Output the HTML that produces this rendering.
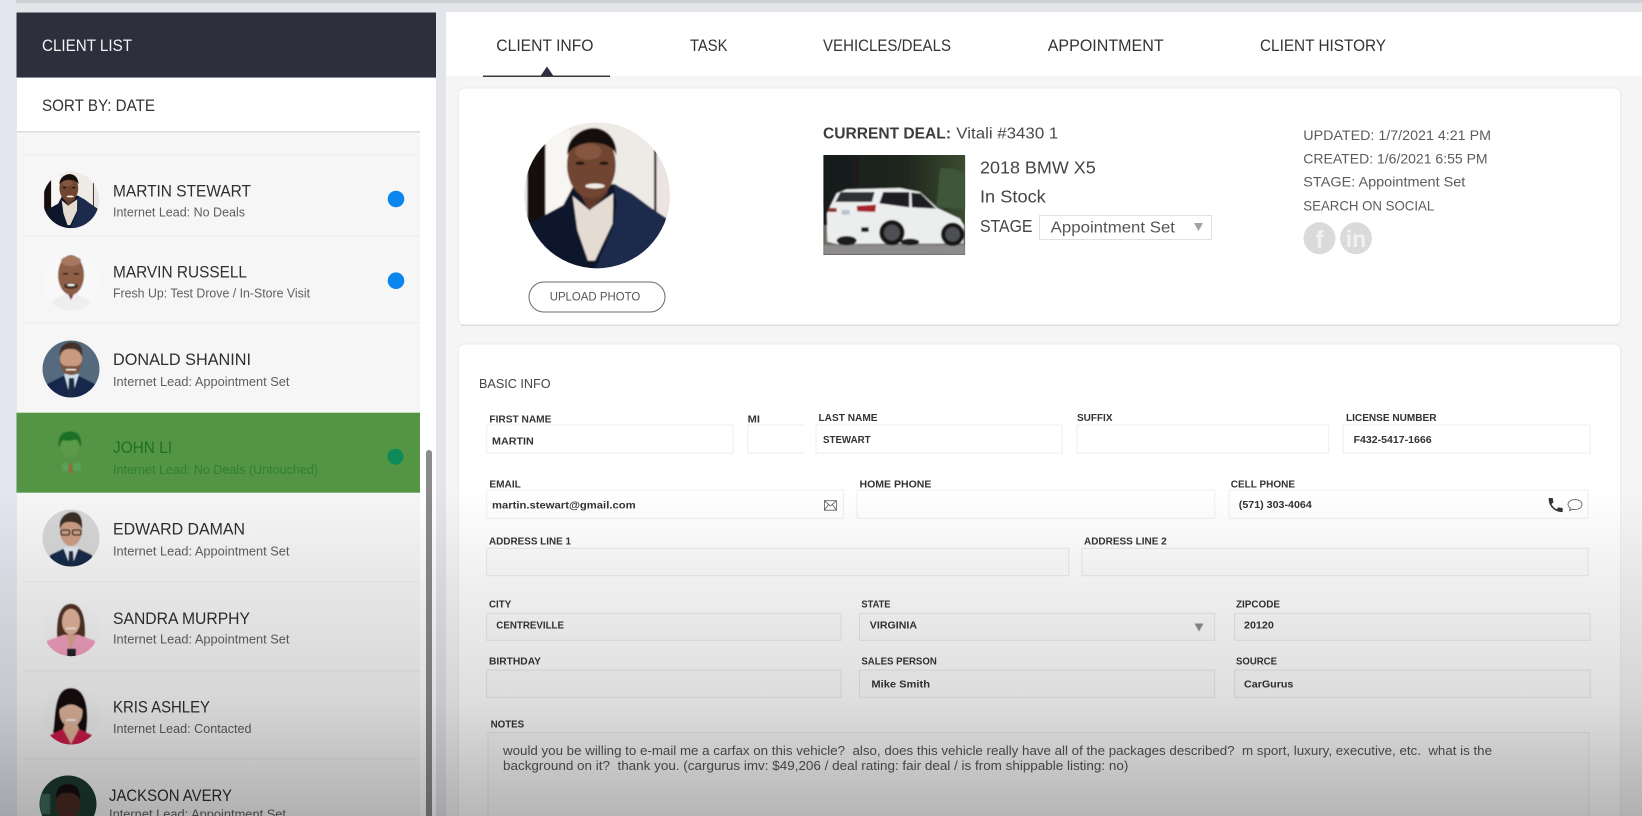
<!DOCTYPE html>
<html lang="en">
<head>
<meta charset="utf-8">
<title>Client List</title>
<style>
html,body{margin:0;padding:0;width:1642px;height:816px;overflow:hidden;background:#e3e6ee}
svg{display:block;filter:blur(.35px)}
text{font-family:"Liberation Sans",Arial,sans-serif;white-space:pre}
.tab{font-size:16.5px;fill:#333}
.hd{font-size:16.5px;fill:#333;transform:translateY(-.8px)}
.nm{font-size:16.5px;fill:#2e2e2e;transform:translateY(-.8px)}
.sb{font-size:12.5px;fill:#5f5f5f}
.lb{font-size:10.2px;font-weight:700;fill:#333}
.vl{font-size:10.5px;font-weight:700;fill:#333}
.dt{font-size:14px;fill:#5c5c5c}
.cr{font-size:17.5px;fill:#444}
.nt{font-size:12.5px;fill:#555}
.in{fill:#fff;stroke:#eeeeee;stroke-width:1}
.in2{fill:#fdfdfd;stroke:#e9e9e9;stroke-width:1}
</style>
</head>
<body>
<svg xmlns="http://www.w3.org/2000/svg" width="1642" height="816" viewBox="0 0 1642 816">
<defs>
<linearGradient id="fade" gradientUnits="userSpaceOnUse" x1="0" y1="490" x2="0" y2="816">
<stop offset="0" stop-color="#000" stop-opacity="0"/>
<stop offset=".276" stop-color="#000" stop-opacity=".06"/>
<stop offset=".644" stop-color="#000" stop-opacity=".13"/>
<stop offset="1" stop-color="#000" stop-opacity=".28"/>
</linearGradient>
<linearGradient id="trees" x1="0" y1="0" x2="1" y2="0">
<stop offset="0" stop-color="#16191a"/>
<stop offset=".6" stop-color="#20281f"/>
<stop offset="1" stop-color="#3c4c30"/>
</linearGradient>
<filter id="b1" x="-10%" y="-10%" width="120%" height="120%"><feGaussianBlur stdDeviation="2.5"/></filter>
<filter id="b2" x="-10%" y="-10%" width="120%" height="120%"><feGaussianBlur stdDeviation=".5"/></filter>
<clipPath id="bigc"><circle cx="291" cy="256" r="219"/></clipPath>
<clipPath id="c29"><circle cx="0" cy="0" r="28.5"/></clipPath>
<clipPath id="carc"><rect x="970" y="135" width="426" height="300"/></clipPath>
<g id="martin">
<g clip-path="url(#bigc)"><g filter="url(#b1)">
<rect x="60" y="30" width="470" height="460" fill="#eeebe7"/>
<rect x="130" y="60" width="80" height="260" fill="#f7f6f2"/>
<rect x="82" y="100" width="54" height="240" fill="#17110e"/>
<rect x="462" y="120" width="8" height="190" fill="#3a3532"/>
<rect x="470" y="100" width="50" height="220" fill="#ebe4e2"/>
<path d="M80 345L190 285 218 232 345 222 410 265 500 325 520 490 60 490Z" fill="#111929"/>
<path d="M342 222L395 250 495 325 490 400 400 475 285 480 340 350 350 280Z" fill="#1c2a4c"/>
<path d="M218 258L268 300 340 250 338 340 285 452 264 452 232 360Z" fill="#e4dcd2"/>
<path d="M222 220L268 302 322 250 328 190Z" fill="#5f3929"/>
<ellipse cx="274" cy="165" rx="73" ry="100" fill="#6f4430"/>
<ellipse cx="265" cy="125" rx="40" ry="24" fill="#855640"/>
<path d="M202 135C198 85 245 54 280 54 322 54 352 90 349 135 340 112 318 100 275 98 240 100 214 112 202 135Z" fill="#17110e"/>
<ellipse cx="240" cy="160" rx="14" ry="5" fill="#1e130e"/>
<ellipse cx="312" cy="160" rx="14" ry="5" fill="#1e130e"/>
<ellipse cx="285" cy="228" rx="29" ry="7.500" fill="#f2ece6"/>
</g></g>
</g>
</defs>

<!-- page chrome -->
<rect width="1642" height="816" fill="#e3e6ee"/>
<rect x="16" y="0" width="1626" height="3" fill="#cfd0d4"/>
<rect x="16" y="3" width="1626" height="9" fill="#e4e5e9"/>

<!-- client list panel -->
<rect x="16.500" y="12.500" width="420" height="65" fill="#2e2f3d"/>
<text x="42" y="52" class="hd" style="fill:#f4f4f6" textLength="90" lengthAdjust="spacingAndGlyphs">CLIENT LIST</text>
<rect x="17" y="78" width="419" height="738" fill="#fff"/>
<text x="42" y="112" class="hd" textLength="113" lengthAdjust="spacingAndGlyphs">SORT BY: DATE</text>
<rect x="17" y="132" width="403" height="684" fill="#f6f6f6"/>
<rect x="17" y="131" width="403" height="1.500" fill="#dcdcdc"/>
<g fill="#efefef">
<rect x="23" y="154.500" width="397" height="1.500"/>
<rect x="23" y="235" width="397" height="1.500"/>
<rect x="23" y="322" width="397" height="1.500"/>
<rect x="23" y="581" width="397" height="1.500"/>
<rect x="23" y="670.500" width="397" height="1.500"/>
<rect x="23" y="758" width="397" height="1.500"/>
</g>
<rect x="426" y="450" width="6" height="380" rx="3" fill="#8b8b8b"/>
<rect x="436" y="12" width="10" height="804" fill="#e3e5ea"/>

<!-- row: Martin -->
<g transform="translate(71,200) scale(.385) scale(.3333) translate(-291,-256)"><use href="#martin"/></g>
<text x="113" y="197.300" class="nm" textLength="138" lengthAdjust="spacingAndGlyphs">MARTIN STEWART</text>
<text x="113" y="216.700" class="sb" textLength="132" lengthAdjust="spacingAndGlyphs">Internet Lead: No Deals</text>
<circle cx="396" cy="199" r="8.300" fill="#0a86ee"/>

<!-- row: Marvin -->
<g transform="translate(71,282)" clip-path="url(#c29)"><g filter="url(#b2)">
<rect x="-30" y="-30" width="60" height="60" fill="#f8f8f8"/>
<path d="M-22 30L-18 18-6 12 6 12 18 18 22 30Z" fill="#eeeeee"/>
<path d="M-6 6L0 18 6 6Z" fill="#7a4d38"/>
<ellipse cx="0" cy="-7" rx="13" ry="20" fill="#8d5e47"/>
<ellipse cx="0" cy="-21" rx="10" ry="5" fill="#a67860"/>
<ellipse cx="0" cy="4" rx="7" ry="3" fill="#4a2f24"/>
<ellipse cx="0" cy="3" rx="4" ry="1.200" fill="#eee"/>
<rect x="-8" y="-9" width="5" height="1.600" fill="#2a1a14"/>
<rect x="3" y="-9" width="5" height="1.600" fill="#2a1a14"/>
</g></g>
<text x="113" y="278.300" class="nm" textLength="134" lengthAdjust="spacingAndGlyphs">MARVIN RUSSELL</text>
<text x="113" y="297.700" class="sb" textLength="197" lengthAdjust="spacingAndGlyphs">Fresh Up: Test Drove / In-Store Visit</text>
<circle cx="396" cy="280.700" r="8.300" fill="#0a86ee"/>

<!-- row: Donald -->
<g transform="translate(71,369)" clip-path="url(#c29)"><g filter="url(#b2)">
<rect x="-30" y="-30" width="60" height="60" fill="#556a7c"/>
<path d="M-27 30L-24 15-6 6 6 6 24 15 27 30Z" fill="#13284d"/>
<path d="M-7 5L0 30 8 5Z" fill="#cfdbe6"/>
<path d="M-2 9L3 9 4 30-3 30Z" fill="#1b2a45"/>
<ellipse cx="0" cy="-11" rx="11" ry="15" fill="#c99a80"/>
<path d="M-11-8C-10 4-4 6 0 6 5 6 10 4 11-8 8-2 5-3 0-3-5-3-8-2-11-8Z" fill="#7a5742"/>
<path d="M-11-12C-13-24-4-27 1-27 8-27 13-22 11-12 8-20 3-20-1-20-6-20-9-19-11-12Z" fill="#41302a"/>
<rect x="-5" y="0" width="10" height="1.400" fill="#f4eee8"/>
</g></g>
<text x="113" y="366" class="nm" textLength="138" lengthAdjust="spacingAndGlyphs">DONALD SHANINI</text>
<text x="113" y="386" class="sb" textLength="176.500" lengthAdjust="spacingAndGlyphs">Internet Lead: Appointment Set</text>

<!-- row: John (highlighted) -->
<rect x="16.500" y="412.700" width="403.500" height="80" fill="#539544"/>
<g filter="url(#b2)">
<rect x="61" y="439" width="18" height="18" rx="8" fill="#5a9a49"/>
<path d="M59 447C57 436 63 431.500 70 431.500 78 431.500 82 436 81 447 79 444 79 440 76 439.500 70 441 65 441 63 440 60 441 61 445 59 447Z" fill="#1f6f28"/>
<rect x="62" y="463" width="8" height="8" rx="2" fill="#58a157"/>
<rect x="73" y="463" width="8" height="8" rx="2" fill="#58a157"/>
<path d="M69 463L71.500 463 72.500 473 68 473Z" fill="#936a3c"/>
</g>
<text x="113" y="454" class="nm" style="fill:#216f22" textLength="59" lengthAdjust="spacingAndGlyphs">JOHN LI</text>
<text x="113" y="474" class="sb" style="fill:#2f7f35" textLength="205" lengthAdjust="spacingAndGlyphs">Internet Lead: No Deals (Untouched)</text>
<circle cx="395.500" cy="456.700" r="8" fill="#0e8a58"/>

<!-- row: Edward -->
<g transform="translate(71,538)" clip-path="url(#c29)"><g filter="url(#b2)">
<rect x="-30" y="-30" width="60" height="60" fill="#d6d6d6"/>
<path d="M-24 30L-21 17-6 10 6 10 21 17 24 30Z" fill="#13294a"/>
<path d="M-8 9L0 30 8 9Z" fill="#dfe6ee"/>
<path d="M-2 13L2 13 3 30-3 30Z" fill="#1d2a44"/>
<ellipse cx="0" cy="-7" rx="11" ry="15" fill="#cb9c84"/>
<path d="M-11-9C-13-21-4-26 2-26 9-26 12-19 11-9 8-16 3-16-2-16-6-16-9-15-11-9Z" fill="#3a2d28"/>
<rect x="-10" y="-8" width="8.500" height="5" rx="1.500" fill="none" stroke="#1d1a1a" stroke-width="1.300"/>
<rect x="1.500" y="-8" width="8.500" height="5" rx="1.500" fill="none" stroke="#1d1a1a" stroke-width="1.300"/>
</g></g>
<text x="113" y="535.300" class="nm" textLength="132" lengthAdjust="spacingAndGlyphs">EDWARD DAMAN</text>
<text x="113" y="555.300" class="sb" textLength="176.500" lengthAdjust="spacingAndGlyphs">Internet Lead: Appointment Set</text>

<!-- row: Sandra -->
<g transform="translate(71,627.700)" clip-path="url(#c29)"><g filter="url(#b2)">
<rect x="-30" y="-30" width="60" height="60" fill="#f4f4f4"/>
<path d="M-14 9C-15-14-9-24 0-24 9-24 15-14 14 9Z" fill="#4f3127"/>
<path d="M-25 30L-24 13-7 7 7 7 24 13 25 30Z" fill="#f09fbe"/>
<path d="M-5 7L0 22 5 7Z" fill="#d8a58e"/>
<rect x="-4" y="21" width="9" height="9" fill="#222"/>
<ellipse cx="0" cy="-6" rx="9" ry="13" fill="#e0b29b"/>
<rect x="-5" y="0" width="10" height="1.500" fill="#f6eee8"/>
</g></g>
<text x="113" y="624.700" class="nm" textLength="137" lengthAdjust="spacingAndGlyphs">SANDRA MURPHY</text>
<text x="113" y="643.700" class="sb" textLength="176.500" lengthAdjust="spacingAndGlyphs">Internet Lead: Appointment Set</text>

<!-- row: Kris -->
<g transform="translate(71,716)" clip-path="url(#c29)"><g filter="url(#b2)">
<rect x="-30" y="-30" width="60" height="60" fill="#f3f3f3"/>
<path d="M-18 17C-15 2-18-28 0-28 17-28 18 0 15 17Z" fill="#17110f"/>
<path d="M-24 30L-21 19-8 13 8 13 21 19 24 30Z" fill="#cf1f4c"/>
<path d="M-8 13L0 28 8 13 5 5-5 5Z" fill="#e2b59b"/>
<ellipse cx="0" cy="-4" rx="11.500" ry="15" fill="#e3b89f"/>
<path d="M-12-6C-10-18-3-20 2-20 8-18 11-14 12-6 6-10 0-16-12-6Z" fill="#17110f"/>
<rect x="-5" y="3" width="10" height="2" rx="1" fill="#f8f2ee"/>
</g></g>
<text x="113" y="713.300" class="nm" textLength="97" lengthAdjust="spacingAndGlyphs">KRIS ASHLEY</text>
<text x="113" y="733" class="sb" textLength="138.500" lengthAdjust="spacingAndGlyphs">Internet Lead: Contacted</text>

<!-- row: Jackson -->
<g transform="translate(68,804)" clip-path="url(#c29)"><g filter="url(#b2)">
<rect x="-30" y="-30" width="60" height="60" fill="#1d3a30"/>
<rect x="-28" y="-10" width="10" height="20" fill="#3d6b58"/>
<ellipse cx="0" cy="0" rx="12" ry="17" fill="#4a2c20"/>
<path d="M-12-4C-13-18-5-20 0-20 7-20 13-16 12-4 8-11 3-11-1-11-5-11-9-11-12-4Z" fill="#15100e"/>
<path d="M-24 30L-14 15 14 15 24 30Z" fill="#141615"/>
</g></g>
<text x="109" y="802" class="nm" textLength="123" lengthAdjust="spacingAndGlyphs">JACKSON AVERY</text>
<text x="109" y="818.500" class="sb" textLength="177" lengthAdjust="spacingAndGlyphs">Internet Lead: Appointment Set</text>

<!-- main area -->
<rect x="446" y="76" width="1196" height="740" fill="#f5f5f5"/>
<rect x="446" y="12" width="1196" height="64" fill="#fff"/>
<text x="496.300" y="51" class="tab" textLength="97.200" lengthAdjust="spacingAndGlyphs">CLIENT INFO</text>
<text x="690" y="51" class="tab" textLength="37.500" lengthAdjust="spacingAndGlyphs">TASK</text>
<text x="823" y="51" class="tab" textLength="128" lengthAdjust="spacingAndGlyphs">VEHICLES/DEALS</text>
<text x="1047.700" y="51" class="tab" textLength="116" lengthAdjust="spacingAndGlyphs">APPOINTMENT</text>
<text x="1260" y="51" class="tab" textLength="126" lengthAdjust="spacingAndGlyphs">CLIENT HISTORY</text>
<rect x="483" y="75.500" width="127" height="1.500" fill="#3a3a3a"/>
<path d="M540.500 76L547 66.500 553.500 76Z" fill="#2e2f3d"/>

<!-- card 1 -->
<rect x="458.500" y="88" width="1162" height="237" rx="6" fill="#fff" stroke="#ececec"/>
<rect x="461" y="324.500" width="1158" height="1.500" fill="#dcdcdc"/>
<g transform="translate(500,110) scale(.3333)"><use href="#martin"/></g>
<rect x="529" y="282" width="136" height="30" rx="15" fill="#fff" stroke="#6a6a6a" stroke-width="1"/>
<text x="549.700" y="300.700" font-size="12" fill="#555" textLength="90.600" lengthAdjust="spacingAndGlyphs">UPLOAD PHOTO</text>

<text x="823" y="138.300" font-size="15.500" font-weight="700" fill="#3c3c3c" textLength="128" lengthAdjust="spacingAndGlyphs">CURRENT DEAL:</text>
<text x="956.300" y="138.300" font-size="15.500" fill="#4a4a4a" textLength="102" lengthAdjust="spacingAndGlyphs">Vitali #3430 1</text>

<!-- car photo -->
<g>
<rect x="823.500" y="155" width="141.500" height="100" fill="url(#trees)"/>
<g transform="translate(500,110) scale(.3333)" clip-path="url(#carc)"><g filter="url(#b1)">
<path d="M970 135L1396 135 1396 290 970 290Z" fill="url(#trees)"/>
<path d="M1320 175C1350 170 1396 185 1396 200L1396 300 1310 290Z" fill="#41563a"/>
<rect x="970" y="345" width="426" height="60" fill="#6f6d64"/>
<rect x="970" y="405" width="426" height="30" fill="#8e8b8c"/>
<path d="M982 395L980 310 1010 250 1040 238 1200 234 1260 246 1310 292 1380 325 1392 345 1390 400 1010 402Z" fill="#eceeee"/>
<path d="M1006 276L1022 246 1124 246 1116 276Z" fill="#2e3034"/>
<path d="M1138 280L1150 246 1228 246 1228 292Z" fill="#1a1d20"/>
<path d="M1234 248L1262 250 1308 296 1236 292Z" fill="#1a1d20"/>
<path d="M1070 288L1128 284 1126 306 1072 304Z" fill="#a8242c"/>
<rect x="984" y="294" width="26" height="12" fill="#8f2a30"/>
<rect x="1025" y="300" width="24" height="14" fill="#b8c2d0"/>
<rect x="1084" y="352" width="22" height="14" fill="#1c1c1c"/>
<ellipse cx="1040" cy="392" rx="30" ry="14" fill="#1a1a1a"/>
<ellipse cx="1230" cy="396" rx="28" ry="10" fill="#1a1a1a"/>
<circle cx="1176" cy="368" r="38" fill="#121212"/>
<circle cx="1176" cy="368" r="24" fill="#4d5054"/>
<circle cx="1358" cy="373" r="35" fill="#121212"/>
<circle cx="1358" cy="373" r="22" fill="#4d5054"/>
</g></g>
</g>

<text x="980" y="173.300" class="cr" textLength="115.700" lengthAdjust="spacingAndGlyphs">2018 BMW X5</text>
<text x="980" y="202.700" class="cr" textLength="65.800" lengthAdjust="spacingAndGlyphs">In Stock</text>
<text x="980" y="232" class="cr" textLength="52.500" lengthAdjust="spacingAndGlyphs">STAGE</text>
<rect x="1039.500" y="215.500" width="172" height="24" fill="#fff" stroke="#dfe0e3"/>
<text x="1050.700" y="232.700" font-size="15.500" fill="#555" textLength="124.300" lengthAdjust="spacingAndGlyphs">Appointment Set</text>
<path d="M1194 223L1203 223 1198.500 231Z" fill="#a2a2a2"/>

<text x="1303.300" y="140" class="dt" textLength="187.700" lengthAdjust="spacingAndGlyphs">UPDATED: 1/7/2021 4:21 PM</text>
<text x="1303.300" y="163.300" class="dt" textLength="184.300" lengthAdjust="spacingAndGlyphs">CREATED: 1/6/2021 6:55 PM</text>
<text x="1303.300" y="186.700" class="dt" textLength="162" lengthAdjust="spacingAndGlyphs">STAGE: Appointment Set</text>
<text x="1303.300" y="210.700" class="dt" textLength="130.900" lengthAdjust="spacingAndGlyphs">SEARCH ON SOCIAL</text>
<circle cx="1319.500" cy="238.300" r="16" fill="#dadada"/>
<circle cx="1356" cy="238.300" r="16" fill="#dadada"/>
<text x="1319.500" y="248" font-size="25" font-weight="700" fill="#f1f1f1" text-anchor="middle">f</text>
<text x="1356" y="247" font-size="23" font-weight="700" fill="#f1f1f1" text-anchor="middle">in</text>

<!-- card 2 -->
<rect x="458.500" y="344" width="1162" height="490" rx="6" fill="#fff" stroke="#ececec"/>
<text x="479" y="388" font-size="13px" fill="#444" textLength="71.600" lengthAdjust="spacingAndGlyphs">BASIC INFO</text>

<!-- row 1 -->
<text x="489.400" y="422.300" class="lb" textLength="62" lengthAdjust="spacingAndGlyphs">FIRST NAME</text>
<text x="747.700" y="422.300" class="lb" textLength="12.300" lengthAdjust="spacingAndGlyphs">MI</text>
<text x="818.500" y="421" class="lb" textLength="59" lengthAdjust="spacingAndGlyphs">LAST NAME</text>
<text x="1077" y="421" class="lb" textLength="35.500" lengthAdjust="spacingAndGlyphs">SUFFIX</text>
<text x="1346" y="421" class="lb" textLength="90.500" lengthAdjust="spacingAndGlyphs">LICENSE NUMBER</text>
<rect class="in" x="486.700" y="425" width="246.300" height="28"/>
<path d="M804 425H747.700V453H804" fill="#fff" stroke="#eeeeee"/>
<rect class="in" x="816" y="425" width="246" height="28"/>
<rect class="in" x="1077" y="425" width="251.700" height="28"/>
<rect class="in" x="1343" y="425" width="247" height="28"/>
<text x="492" y="444.300" class="vl" textLength="41.800" lengthAdjust="spacingAndGlyphs">MARTIN</text>
<text x="823" y="443" class="vl" textLength="47.600" lengthAdjust="spacingAndGlyphs">STEWART</text>
<text x="1353.600" y="443" class="vl" textLength="78" lengthAdjust="spacingAndGlyphs">F432-5417-1666</text>

<!-- row 2 -->
<text x="489.400" y="487.700" class="lb" textLength="31.400" lengthAdjust="spacingAndGlyphs">EMAIL</text>
<text x="859.500" y="487.700" class="lb" textLength="71.900" lengthAdjust="spacingAndGlyphs">HOME PHONE</text>
<text x="1230.800" y="487.700" class="lb" textLength="64.200" lengthAdjust="spacingAndGlyphs">CELL PHONE</text>
<rect class="in" x="486.700" y="490" width="356.700" height="28.300"/>
<rect class="in" x="857" y="490" width="357.700" height="28.300"/>
<rect class="in" x="1229" y="490" width="358.800" height="28.300"/>
<text x="492" y="508.700" class="vl" textLength="143.600" lengthAdjust="spacingAndGlyphs">martin.stewart@gmail.com</text>
<text x="1238.800" y="508" class="vl" textLength="73" lengthAdjust="spacingAndGlyphs">(571) 303-4064</text>
<g fill="none" stroke="#555" stroke-width=".8">
<rect x="824.400" y="500.700" width="12" height="9.500"/>
<path d="M824.400 500.700L830.400 506 836.400 500.700M824.400 510.200L828.400 504.500M836.400 510.200L832.400 504.500"/>
</g>
<path transform="translate(1546.300,495.700) scale(.78)" d="M6.600 10.800c1.400 2.800 3.800 5.100 6.600 6.600l2.200-2.200c.3-.3.7-.4 1-.2 1.100.4 2.300.6 3.600.6.600 0 1 .4 1 1V20c0 .6-.4 1-1 1C10.600 21 3 13.400 3 4c0-.6.4-1 1-1h3.500c.6 0 1 .4 1 1 0 1.300.2 2.500.6 3.600.1.300 0 .7-.2 1z" fill="#333"/>
<path d="M1575 499.500c3.900 0 7 2.300 7 5 0 2.800-3.100 5-7 5-.9 0-1.700-.1-2.500-.3l-3 1.300.9-2.500c-1.500-.9-2.400-2.100-2.400-3.500 0-2.700 3.100-5 7-5z" fill="none" stroke="#555" stroke-width=".8"/>

<!-- row 3 -->
<text x="489" y="544.700" class="lb" textLength="82" lengthAdjust="spacingAndGlyphs">ADDRESS LINE 1</text>
<text x="1084" y="544.700" class="lb" textLength="82.700" lengthAdjust="spacingAndGlyphs">ADDRESS LINE 2</text>
<rect class="in2" x="486.700" y="548.300" width="582.100" height="27.400"/>
<rect class="in2" x="1082" y="548.300" width="506" height="27.400"/>

<!-- row 4 -->
<text x="489" y="607.700" class="lb" textLength="22.200" lengthAdjust="spacingAndGlyphs">CITY</text>
<text x="861.400" y="607.700" class="lb" textLength="29.100" lengthAdjust="spacingAndGlyphs">STATE</text>
<text x="1236" y="607.700" class="lb" textLength="44" lengthAdjust="spacingAndGlyphs">ZIPCODE</text>
<rect class="in2" x="486.700" y="613.300" width="354.300" height="27"/>
<rect class="in2" x="859.500" y="613.300" width="355.200" height="27"/>
<rect class="in2" x="1234.600" y="613.300" width="355.400" height="27"/>
<text x="496.300" y="628.300" class="vl" textLength="67.700" lengthAdjust="spacingAndGlyphs">CENTREVILLE</text>
<text x="869.800" y="628.300" class="vl" textLength="47.200" lengthAdjust="spacingAndGlyphs">VIRGINIA</text>
<text x="1244" y="628.300" class="vl" textLength="29.800" lengthAdjust="spacingAndGlyphs">20120</text>
<path d="M1194.500 623.500L1203.500 623.500 1199 631.500Z" fill="#8e8e8e"/>

<!-- row 5 -->
<text x="489" y="664.700" class="lb" textLength="52" lengthAdjust="spacingAndGlyphs">BIRTHDAY</text>
<text x="861.400" y="664.700" class="lb" textLength="75.400" lengthAdjust="spacingAndGlyphs">SALES PERSON</text>
<text x="1236" y="664.700" class="lb" textLength="41" lengthAdjust="spacingAndGlyphs">SOURCE</text>
<rect class="in2" x="486.700" y="670" width="354.300" height="27.300"/>
<rect class="in2" x="859.500" y="670" width="355.200" height="27.300"/>
<rect class="in2" x="1234.600" y="670" width="355.400" height="27.300"/>
<text x="871.400" y="687.300" class="vl" textLength="58.600" lengthAdjust="spacingAndGlyphs">Mike Smith</text>
<text x="1244" y="687.300" class="vl" textLength="49.400" lengthAdjust="spacingAndGlyphs">CarGurus</text>

<!-- notes -->
<text x="490.600" y="727.700" class="lb" textLength="33.600" lengthAdjust="spacingAndGlyphs">NOTES</text>
<rect class="in2" x="488" y="732.700" width="1101" height="120"/>
<text x="503" y="755" class="nt" textLength="989" lengthAdjust="spacingAndGlyphs">would you be willing to e-mail me a carfax on this vehicle?  also, does this vehicle really have all of the packages described?  m sport, luxury, executive, etc.  what is the</text>
<text x="503" y="770" class="nt" textLength="625.300" lengthAdjust="spacingAndGlyphs">background on it?  thank you. (cargurus imv: $49,206 / deal rating: fair deal / is from shippable listing: no)</text>

<!-- bottom fade -->
<rect x="0" y="490" width="1642" height="326" fill="url(#fade)"/>
</svg>
</body>
</html>
